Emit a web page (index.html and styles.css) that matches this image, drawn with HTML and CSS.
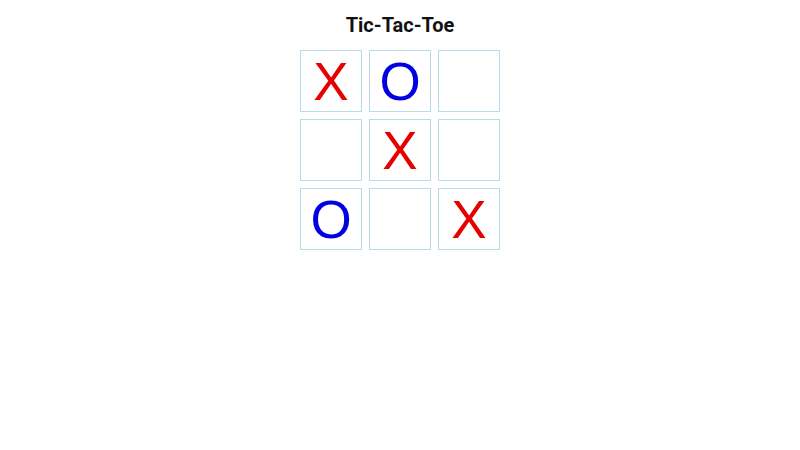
FILE: index.html
```html
<!DOCTYPE html>
<html>
<head>
<meta charset="utf-8">
<title>Tic-Tac-Toe</title>
<link rel="stylesheet" href="styles.css">
</head>
<body>
<main class="game">
  <h1 class="title">Tic-Tac-Toe</h1>
  <div class="board">
    <div class="cell x">X</div>
    <div class="cell o">O</div>
    <div class="cell"></div>
    <div class="cell"></div>
    <div class="cell x">X</div>
    <div class="cell"></div>
    <div class="cell o">O</div>
    <div class="cell"></div>
    <div class="cell x">X</div>
  </div>
</main>
</body>
</html>
```
FILE: styles.css
```css
body {
  margin: 0;
  background: #fff;
  font-family: "Liberation Sans", Arial, sans-serif;
}

.game {
  display: flex;
  flex-direction: column;
  align-items: center;
}

.title {
  margin: 13px 0 13px;
  font-family: Roboto, "Liberation Sans", sans-serif;
  font-size: 20px;
  font-weight: 700;
  line-height: 24px;
  color: #111;
}

.board {
  display: grid;
  grid-template-columns: repeat(3, 62px);
  grid-auto-rows: 62px;
  gap: 7px;
}

.cell {
  box-sizing: border-box;
  border: 1px solid #b9dbe8;
  display: flex;
  align-items: center;
  justify-content: center;
  font-size: 53px;
  line-height: 1;
}

.x { color: #e60000; }
.o { color: #0000e0; }
```
